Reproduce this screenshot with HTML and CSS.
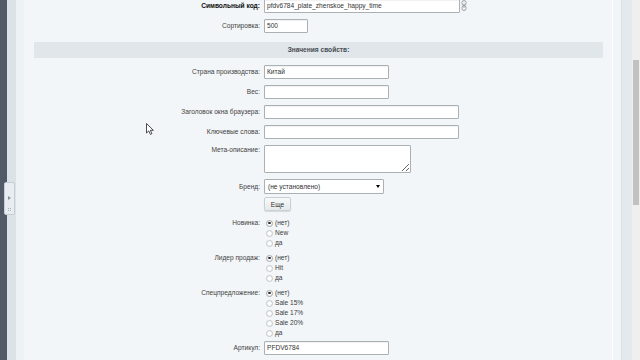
FILE: index.html
```html
<!DOCTYPE html>
<html lang="ru">
<head>
<meta charset="utf-8">
<title>Форма</title>
<link rel="stylesheet" href="styles.css">
</head>
<body>
<div class="app">
  <div class="rail"></div>
  <div class="rail2"></div>
  <div class="rail3"></div>
  <main class="main">
    <div class="form">
      <div class="row">
        <label class="lbl b">Символьный код:</label>
        <div class="fld">
          <div class="inp w196 txt">pfdv6784_plate_zhenskoe_happy_time</div>
          <svg class="chain" width="6" height="12" viewBox="0 0 6 12"><rect x="1" y="0.5" width="4" height="5" rx="2" fill="none" stroke="#9aa0a4" stroke-width="1"/><rect x="1" y="5.5" width="4" height="5" rx="2" fill="none" stroke="#9aa0a4" stroke-width="1"/><line x1="3" y1="3.5" x2="3" y2="8" stroke="#9aa0a4" stroke-width="1"/></svg>
        </div>
      </div>
      <div class="row">
        <label class="lbl">Сортировка:</label>
        <div class="fld"><input class="inp w44" value="500"></div>
      </div>
      <div class="sect">Значения свойств:</div>
      <div class="row">
        <label class="lbl">Страна производства:</label>
        <div class="fld"><input class="inp w125" value="Китай"></div>
      </div>
      <div class="row">
        <label class="lbl">Вес:</label>
        <div class="fld"><input class="inp w125" value=""></div>
      </div>
      <div class="row">
        <label class="lbl">Заголовок окна браузера:</label>
        <div class="fld"><input class="inp w195" value=""></div>
      </div>
      <div class="row">
        <label class="lbl">Ключевые слова:</label>
        <div class="fld"><input class="inp w195" value=""></div>
      </div>
      <div class="row">
        <label class="lbl top">Мета-описание:</label>
        <div class="fld"><textarea class="ta"></textarea></div>
      </div>
      <div class="row brand">
        <label class="lbl l15">Бренд:</label>
        <div class="fld col">
          <div class="select"><span>(не установлено)</span><span class="caret"></span></div>
          <button class="btn" type="button">Еще</button>
        </div>
      </div>
      <div class="row radios">
        <label class="lbl l10">Новинка:</label>
        <div class="fld col">
          <div class="rad"><span class="dot on"></span>(нет)</div>
          <div class="rad"><span class="dot"></span>New</div>
          <div class="rad"><span class="dot"></span>да</div>
        </div>
      </div>
      <div class="row radios">
        <label class="lbl l10">Лидер продаж:</label>
        <div class="fld col">
          <div class="rad"><span class="dot on"></span>(нет)</div>
          <div class="rad"><span class="dot"></span>Hit</div>
          <div class="rad"><span class="dot"></span>да</div>
        </div>
      </div>
      <div class="row radios last">
        <label class="lbl l10">Спецпредложение:</label>
        <div class="fld col">
          <div class="rad"><span class="dot on"></span>(нет)</div>
          <div class="rad"><span class="dot"></span>Sale 15%</div>
          <div class="rad"><span class="dot"></span>Sale 17%</div>
          <div class="rad"><span class="dot"></span>Sale 20%</div>
          <div class="rad"><span class="dot"></span>да</div>
        </div>
      </div>
      <div class="row">
        <label class="lbl">Артикул:</label>
        <div class="fld"><input class="inp w125" value="PFDV6784"></div>
      </div>
    </div>
  </main>
  <div class="edge"></div>
  <div class="pad"></div>
  <div class="outer"></div>
  <div class="scroll"><div class="thumb"></div></div>
</div>
<div class="toggle"><span class="arrow"></span><span class="grip"></span></div>
<svg class="cursor" width="9" height="13" viewBox="0 0 9 13"><path d="M0.5 0.5 L0.5 10 L2.8 7.9 L4.4 11.4 L5.9 10.7 L4.4 7.3 L7.4 7.3 Z" fill="#fff" stroke="#222" stroke-width="0.8" stroke-linejoin="round"/></svg>
</body>
</html>
```

FILE: styles.css
```css
* { box-sizing: border-box; }
html, body { margin: 0; height: 100%; overflow: hidden; }
body {
  font-family: "Liberation Sans", Arial, sans-serif;
  font-size: 6.6px;
  color: #444;
  position: relative;
  background: #f3f6f8;
}
.app { display: flex; height: 360px; }
.rail { width: 7px; background: #525a68; }
.rail2 { width: 9px; background: #dbe3e7; }
.rail3 { width: 8px; background: #edf2f4; }
.main { flex: 1; background: #f3f6f8; padding: 0 9px 0 10px; overflow: hidden; }
.edge { width: 1px; background: #ffffff; }
.pad { width: 9px; background: #f1f5f7; border-right: 1px solid #d8e0e4; }
.outer { width: 10px; background: #e3e9ec; }
.scroll { width: 8px; background: #efefef; padding: 60px 1px 0 1px; }
.thumb { height: 145px; background: #c1c1c1; }

.form { margin-top: -4px; }
.row {
  display: grid;
  grid-template-columns: 226px 1fr;
  column-gap: 4px;
  padding: 3px 0;
  align-items: start;
}
.lbl { text-align: right; line-height: 14px; white-space: nowrap; color: #424242; }
.lbl.b { font-weight: bold; color: #111; }
.lbl.top { line-height: 10px; }
.lbl.l15 { line-height: 15px; }
.lbl.l10 { line-height: 10px; }
.fld { display: flex; align-items: flex-start; gap: 1px; }
.fld.col { flex-direction: column; gap: 0; }

.inp {
  display: block;
  height: 14px;
  line-height: 11px;
  border: 1px solid #a9b1b5;
  border-radius: 1px;
  background: #fff;
  font-family: inherit;
  font-size: 6.6px;
  color: #333;
  padding: 0 2px 1px;
  margin: 0;
  outline: none;
  box-shadow: inset 0 1px 1px rgba(0,0,0,0.06);
}
.txt { line-height: 12px; padding: 0 2px; white-space: nowrap; overflow: hidden; }
.w196 { width: 196px; }
.w195 { width: 195px; }
.w125 { width: 125px; }
.w44 { width: 44px; }
.chain { display: block; margin-top: 1px; }

.ta {
  display: block;
  width: 147px;
  height: 28px;
  border: 1px solid #a9b1b5;
  border-radius: 1px;
  background: #fff;
  margin: 0;
  font-family: inherit;
  font-size: 6.6px;
}

.sect {
  margin: 6px 0 4px;
  height: 16px;
  line-height: 16px;
  background: #e0e6e9;
  text-align: center;
  font-weight: bold;
  color: #464d53;
}

.brand { padding-bottom: 7px; }
.select {
  width: 120px;
  height: 15px;
  border: 1px solid #a9b1b5;
  border-radius: 1px;
  background: #fff;
  display: flex;
  align-items: center;
  justify-content: space-between;
  padding: 0 3px 0 3px;
  color: #333;
}
.caret {
  width: 0; height: 0;
  border-left: 2px solid transparent;
  border-right: 2px solid transparent;
  border-top: 3px solid #000;
}
.btn {
  margin-top: 3px;
  width: 27px;
  height: 14px;
  padding: 0;
  border: 1px solid #c9d0d3;
  border-radius: 2px;
  background: linear-gradient(#f8fafa, #e4e9eb);
  box-shadow: 0 1px 1px rgba(0,0,0,0.12);
  font-family: inherit;
  font-size: 6.6px;
  color: #333;
}

.radios { padding: 0; margin-bottom: 5px; }
.radios.last { margin-bottom: 0; }
.rad {
  height: 10px;
  line-height: 10px;
  display: flex;
  align-items: center;
  gap: 2px;
  padding-left: 2px;
  color: #3c3c3c;
}
.dot {
  width: 7px; height: 7px;
  border-radius: 50%;
  border: 1px solid #c3c8cb;
  background: radial-gradient(circle, #ffffff 35%, #e3e7ea 100%);
  position: relative;
}
.dot.on { border-color: #a2a8ac; }
.dot.on::after {
  content: "";
  position: absolute;
  left: 1.25px; top: 1.25px;
  width: 2.5px; height: 2.5px;
  border-radius: 50%;
  background: #2f2f2f;
}

.toggle {
  position: absolute;
  left: 4px;
  top: 182px;
  width: 11px;
  height: 33px;
  background: #e7edf0;
  border: 1px solid #c6ced2;
  border-radius: 2px;
}
.arrow {
  position: absolute;
  left: 3px;
  top: 13px;
  width: 0; height: 0;
  border-top: 2.5px solid transparent;
  border-bottom: 2.5px solid transparent;
  border-left: 3px solid #8a949b;
}
.grip {
  position: absolute;
  left: 3px;
  top: 25px;
  width: 3px;
  height: 3px;
  border-top: 1px dotted #a8b0b5;
  border-bottom: 1px dotted #a8b0b5;
}
.cursor { position: absolute; left: 146px; top: 123px; }
```
